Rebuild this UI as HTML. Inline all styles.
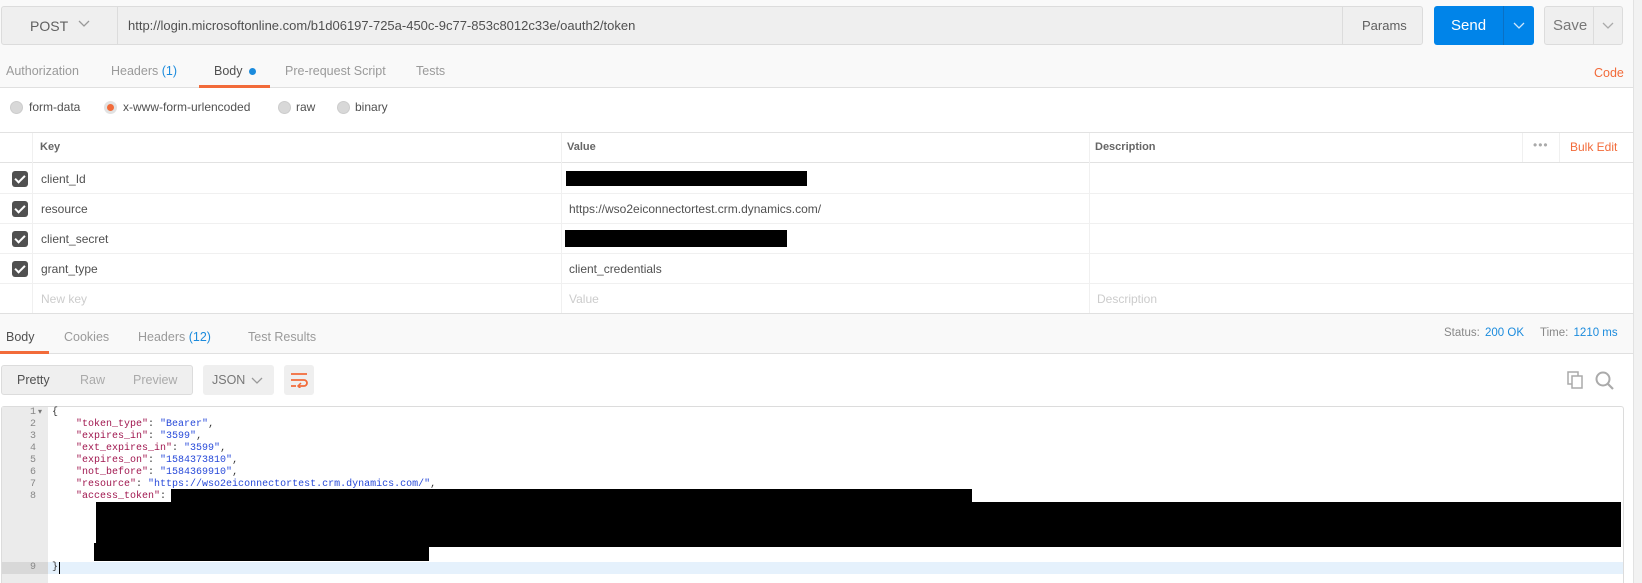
<!DOCTYPE html>
<html><head><meta charset="utf-8">
<style>
*{margin:0;padding:0;box-sizing:border-box}
body{width:1642px;height:583px;overflow:hidden;background:#fff;font-family:"Liberation Sans",sans-serif;font-size:12px;color:#505050;position:relative}
.a{position:absolute;white-space:nowrap}
.g{color:#9a9a9a}
.b{color:#1b8bdd}
.o{color:#f26b3a}
.cb{position:absolute;left:12px;width:16px;height:16px;background:#505050;border-radius:3px}
.cb:after{content:"";position:absolute;left:5px;top:2px;width:4px;height:8px;border:solid #fff;border-width:0 2px 2px 0;transform:rotate(45deg)}
.rd{position:absolute;width:13px;height:13px;border-radius:50%;background:#d8d8d8;border:1px solid #ccc}
.code{font-family:"Liberation Mono",monospace;font-size:10px}
.ln{position:absolute;left:0;width:36px;text-align:right;color:#888;font-family:"Liberation Mono",monospace;font-size:10px;line-height:12px}
.k{color:#a0174f}.s{color:#2749d9}
.blk{position:absolute;background:#000}
.t{font-size:12.5px}
</style></head><body>
<div class="a" style="left:0;top:0;width:1633px;height:88px;background:#f9f9f9;border-bottom:1px solid #e0e0e0"></div>
<div class="a" style="left:1633px;top:0;width:9px;height:583px;background:#f2f2f2;border-left:1px solid #e2e2e2"></div>
<div class="a" style="left:1px;top:6px;width:1422px;height:39px;background:#efefef;border:1px solid #dcdcdc;border-radius:3px"></div>
<div class="a" style="left:117px;top:7px;width:1px;height:37px;background:#dcdcdc"></div>
<div class="a" style="left:30px;top:18px;font-size:14px;color:#606060">POST</div>
<svg class="a" style="left:78px;top:20px" width="12" height="8"><path d="M1 1l5 5 5-5" stroke="#999" fill="none" stroke-width="1.3"/></svg>
<div class="a" style="left:128px;top:18px;font-size:13px;color:#505050">http://login.microsoftonline.com/b1d06197-725a-450c-9c77-853c8012c33e/oauth2/token</div>
<div class="a" style="left:1342px;top:7px;width:1px;height:37px;background:#dcdcdc"></div>
<div class="a" style="left:1362px;top:18px;font-size:13px;color:#606060">Params</div>
<div class="a" style="left:1434px;top:6px;width:100px;height:39px;background:#0084e9;border-radius:3px"></div>
<div class="a" style="left:1503px;top:6px;width:1px;height:39px;background:#0a70c4"></div>
<div class="a" style="left:1451px;top:17px;font-size:15px;color:#fff">Send</div>
<svg class="a" style="left:1513px;top:22px" width="12" height="8"><path d="M1 1l5 5 5-5" stroke="#cfe6fb" fill="none" stroke-width="1.3"/></svg>
<div class="a" style="left:1544px;top:6px;width:79px;height:39px;background:#efefef;border:1px solid #dcdcdc;border-radius:3px"></div>
<div class="a" style="left:1593px;top:7px;width:1px;height:37px;background:#dcdcdc"></div>
<div class="a" style="left:1553px;top:17px;font-size:15px;color:#777">Save</div>
<svg class="a" style="left:1602px;top:22px" width="12" height="8"><path d="M1 1l5 5 5-5" stroke="#aaa" fill="none" stroke-width="1.3"/></svg>
<div class="a g t" style="left:6px;top:64px">Authorization</div>
<div class="a g t" style="left:111px;top:64px">Headers <span class="b">(1)</span></div>
<div class="a t" style="left:214px;top:64px;color:#505050">Body</div>
<div class="a" style="left:249px;top:68px;width:7px;height:7px;border-radius:50%;background:#1b8bdd"></div>
<div class="a g t" style="left:285px;top:64px">Pre-request Script</div>
<div class="a g t" style="left:416px;top:64px">Tests</div>
<div class="a" style="left:199px;top:85px;width:71px;height:3px;background:#f26b3a"></div>
<div class="a o t" style="left:1594px;top:66px">Code</div>
<div class="rd" style="left:10px;top:101px"></div><div class="a" style="left:29px;top:100px">form-data</div>
<div class="rd" style="left:104px;top:101px;background:#f26b3a;border:3px solid #e2e2e2"></div><div class="a" style="left:123px;top:100px">x-www-form-urlencoded</div>
<div class="rd" style="left:278px;top:101px"></div><div class="a" style="left:296px;top:100px">raw</div>
<div class="rd" style="left:337px;top:101px"></div><div class="a" style="left:355px;top:100px">binary</div>
<div class="a" style="left:0;top:132px;width:1633px;height:1px;background:#e2e2e2"></div>
<div class="a" style="left:0;top:162px;width:1633px;height:1px;background:#e2e2e2"></div>
<div class="a" style="left:32px;top:133px;width:1px;height:180px;background:#f0f0f0"></div>
<div class="a" style="left:561px;top:133px;width:1px;height:180px;background:#f0f0f0"></div>
<div class="a" style="left:1089px;top:133px;width:1px;height:180px;background:#f0f0f0"></div>
<div class="a" style="left:1522px;top:133px;width:1px;height:29px;background:#f0f0f0"></div>
<div class="a" style="left:1559px;top:133px;width:1px;height:29px;background:#f0f0f0"></div>
<div class="a" style="left:40px;top:141px;font-size:11px;font-weight:bold;color:#666">Key</div>
<div class="a" style="left:567px;top:141px;font-size:11px;font-weight:bold;color:#666">Value</div>
<div class="a" style="left:1095px;top:141px;font-size:11px;font-weight:bold;color:#666">Description</div>
<div class="a" style="left:1533px;top:138px;font-size:12px;color:#aaa;letter-spacing:1px">•••</div>
<div class="a o" style="left:1570px;top:140px;font-size:12px">Bulk Edit</div>
<div class="a" style="left:0;top:193px;width:1633px;height:1px;background:#f0f0f0"></div>
<div class="a" style="left:0;top:223px;width:1633px;height:1px;background:#f0f0f0"></div>
<div class="a" style="left:0;top:253px;width:1633px;height:1px;background:#f0f0f0"></div>
<div class="a" style="left:0;top:283px;width:1633px;height:1px;background:#f0f0f0"></div>
<div class="cb" style="top:171px"></div><div class="a" style="left:41px;top:172px">client_Id</div>
<div class="cb" style="top:201px"></div><div class="a" style="left:41px;top:202px">resource</div>
<div class="cb" style="top:231px"></div><div class="a" style="left:41px;top:232px">client_secret</div>
<div class="cb" style="top:261px"></div><div class="a" style="left:41px;top:262px">grant_type</div>
<div class="a" style="left:41px;top:292px;color:#ccc">New key</div>
<div class="blk" style="left:566px;top:171px;width:241px;height:15px"></div>
<div class="a" style="left:569px;top:202px">https://wso2eiconnectortest.crm.dynamics.com/</div>
<div class="blk" style="left:565px;top:230px;width:222px;height:17px"></div>
<div class="a" style="left:569px;top:262px">client_credentials</div>
<div class="a" style="left:569px;top:292px;color:#ccc">Value</div>
<div class="a" style="left:1097px;top:292px;color:#ccc">Description</div>
<div class="a" style="left:0;top:313px;width:1633px;height:41px;background:#f9f9f9;border-top:1px solid #e0e0e0;border-bottom:1px solid #e0e0e0"></div>
<div class="a t" style="left:6px;top:330px;color:#505050">Body</div>
<div class="a g t" style="left:64px;top:330px">Cookies</div>
<div class="a g t" style="left:138px;top:330px">Headers <span class="b">(12)</span></div>
<div class="a g t" style="left:248px;top:330px">Test Results</div>
<div class="a" style="left:0;top:351px;width:49px;height:3px;background:#f26b3a"></div>
<div class="a" style="left:1444px;top:327px;font-size:11.5px;color:#888">Status: <span class="b" style="margin-left:2px">200 OK</span></div>
<div class="a" style="left:1540px;top:327px;font-size:11.5px;color:#888">Time: <span class="b" style="margin-left:2px">1210 ms</span></div>
<div class="a" style="left:1px;top:365px;width:192px;height:30px;background:#efefef;border:1px solid #dcdcdc;border-radius:3px"></div>
<div class="a t" style="left:17px;top:373px;color:#505050">Pretty</div>
<div class="a t" style="left:80px;top:373px;color:#aaa">Raw</div>
<div class="a t" style="left:133px;top:373px;color:#aaa">Preview</div>
<div class="a" style="left:203px;top:365px;width:71px;height:30px;background:#efefef;border-radius:3px"></div>
<div class="a t" style="left:212px;top:373px;color:#777">JSON</div>
<svg class="a" style="left:251px;top:377px" width="12" height="8"><path d="M1 1l5 5 5-5" stroke="#999" fill="none" stroke-width="1.3"/></svg>
<div class="a" style="left:284px;top:365px;width:30px;height:30px;background:#efefef;border-radius:3px"></div>
<svg class="a" style="left:290px;top:372px" width="18" height="16"><path d="M1 2h16M1 8h13a3 3 0 0 1 0 6h-5M1 14h5" stroke="#f26b3a" fill="none" stroke-width="1.8"/><path d="M11 11l-3 3 3 3" stroke="#f26b3a" fill="none" stroke-width="1.5"/></svg>
<svg class="a" style="left:1567px;top:371px" width="18" height="18"><rect x="1" y="1" width="10" height="12" fill="none" stroke="#aaa" stroke-width="1.5"/><rect x="5" y="5" width="10" height="12" fill="#fff" stroke="#aaa" stroke-width="1.5"/></svg>
<svg class="a" style="left:1595px;top:371px" width="20" height="20"><circle cx="8" cy="8" r="6.5" fill="none" stroke="#aaa" stroke-width="2"/><path d="M13 13l5 5" stroke="#aaa" stroke-width="2.2"/></svg>
<div class="a" style="left:1px;top:406px;width:1623px;height:177px;border:1px solid #dcdcdc;border-bottom:none;border-radius:3px 3px 0 0"></div>
<div class="a" style="left:2px;top:407px;width:46px;height:176px;background:#ebebeb"></div>
<div class="a" style="left:2px;top:562px;width:46px;height:12px;background:#d8d8d8"></div>
<div class="a" style="left:48px;top:562px;width:1575px;height:12px;background:#e5f1fc"></div>
<div class="ln" style="top:407px">1</div><div class="a" style="left:38px;top:407px;font-size:8px;color:#777">▾</div>
<div class="ln" style="top:419px">2</div><div class="ln" style="top:431px">3</div><div class="ln" style="top:443px">4</div>
<div class="ln" style="top:455px">5</div><div class="ln" style="top:467px">6</div><div class="ln" style="top:479px">7</div>
<div class="ln" style="top:491px">8</div><div class="ln" style="top:562px">9</div>
<div class="a code" style="left:52px;top:407px;line-height:12px;color:#333">
{<br>
&nbsp;&nbsp;&nbsp;&nbsp;<span class="k">"token_type"</span>: <span class="s">"Bearer"</span>,<br>
&nbsp;&nbsp;&nbsp;&nbsp;<span class="k">"expires_in"</span>: <span class="s">"3599"</span>,<br>
&nbsp;&nbsp;&nbsp;&nbsp;<span class="k">"ext_expires_in"</span>: <span class="s">"3599"</span>,<br>
&nbsp;&nbsp;&nbsp;&nbsp;<span class="k">"expires_on"</span>: <span class="s">"1584373810"</span>,<br>
&nbsp;&nbsp;&nbsp;&nbsp;<span class="k">"not_before"</span>: <span class="s">"1584369910"</span>,<br>
&nbsp;&nbsp;&nbsp;&nbsp;<span class="k">"resource"</span>: <span class="s">"https://wso2eiconnectortest.crm.dynamics.com/"</span>,<br>
&nbsp;&nbsp;&nbsp;&nbsp;<span class="k">"access_token"</span>:
</div>
<div class="a code" style="left:52px;top:562px;line-height:12px;color:#333;border-right:1px solid #000;padding-right:1px">}</div>
<div class="blk" style="left:171px;top:489px;width:801px;height:14px"></div>
<div class="blk" style="left:96px;top:502px;width:1525px;height:45px"></div>
<div class="blk" style="left:94px;top:543px;width:335px;height:18px"></div>
</body></html>
